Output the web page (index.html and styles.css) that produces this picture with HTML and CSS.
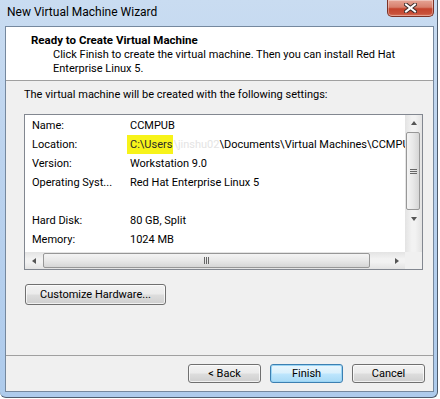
FILE: index.html
```html
<!DOCTYPE html>
<html lang="en">

<head>
    <meta charset="UTF-8">
    <title>New Virtual Machine Wizard</title>
    <link rel="stylesheet" href="styles.css">
</head>

<body>
    <div class="vindue">
        <div class="titellinje">
            <span class="titel">New Virtual Machine Wizard</span>
            <button class="luk" aria-label="Close">
                <svg width="13" height="10" viewBox="0 0 13 10">
                    <path d="M2 1.5 L11 8.5 M11 1.5 L2 8.5" stroke="#3a2a28" stroke-width="4" stroke-linecap="square" fill="none"/>
                    <path d="M2 1.5 L11 8.5 M11 1.5 L2 8.5" stroke="#fff" stroke-width="2" stroke-linecap="square" fill="none"/>
                </svg>
            </button>
        </div>

        <div class="klient">
            <header class="hoved">
                <h1>Ready to Create Virtual Machine</h1>
                <p>Click Finish to create the virtual machine. Then you can install Red Hat<br>Enterprise Linux 5.</p>
            </header>

            <section class="indhold">
                <p class="intro">The virtual machine will be created with the following settings:</p>

                <div class="liste">
                    <div class="raekker">
                        <div class="raekke"><span class="navn">Name:</span><span>CCMPUB</span></div>
                        <div class="raekke"><span class="navn">Location:</span><span><span class="gul">C:\Users</span><span class="sloret">\jinshu02</span>\Documents\Virtual Machines\CCMPUB</span></div>
                        <div class="raekke"><span class="navn">Version:</span><span>Workstation 9.0</span></div>
                        <div class="raekke"><span class="navn">Operating Syst...</span><span>Red Hat Enterprise Linux 5</span></div>
                        <div class="raekke"></div>
                        <div class="raekke"><span class="navn">Hard Disk:</span><span>80 GB, Split</span></div>
                        <div class="raekke"><span class="navn">Memory:</span><span>1024 MB</span></div>
                    </div>

                    <div class="skinne lodret">
                        <span class="pil op"></span>
                        <span class="greb lodret-greb"><i></i></span>
                        <span class="pil ned"></span>
                    </div>

                    <div class="skinne vandret">
                        <span class="pil venstre"></span>
                        <span class="greb vandret-greb"><i></i></span>
                        <span class="pil hoejre"></span>
                    </div>

                    <div class="hjoerne"></div>
                </div>

                <button class="knap tilpas">Customize Hardware...</button>
            </section>

            <footer class="bund">
                <button class="knap">&lt; Back</button>
                <button class="knap standard">Finish</button>
                <button class="knap">Cancel</button>
            </footer>
        </div>
    </div>
</body>

</html>
```

FILE: styles.css
```css
* {
    margin: 0;
    padding: 0;
    box-sizing: border-box;
}

body {
    margin: 0;
    background: #fff;
    font-family: Roboto, "Noto Sans", sans-serif;
    font-size: 11px;
    color: #000;
}

/* vinduesramme */
.vindue {
    width: 438px;
    height: 398px;
    display: flex;
    flex-direction: column;
    padding: 0 3px 5px 5px;
    border-right: 1px solid #4f5d6e;
    border-bottom: 1px solid #4f5d6e;
    border-radius: 0 0 6px 6px;
    background: linear-gradient(180deg, #c9dcf1 0%, #bcd3ee 40%, #aecbec 100%);
}

.titellinje {
    height: 26px;
    display: flex;
    align-items: flex-start;
}

.titel {
    padding: 4px 0 0 2px;
    font-size: 12px;
    line-height: 16px;
}

.luk {
    margin-left: auto;
    width: 47px;
    height: 17px;
    display: flex;
    align-items: center;
    justify-content: center;
    border: 1px solid #7c3226;
    border-top: none;
    border-radius: 0 0 5px 5px;
    background: linear-gradient(180deg, #e6a495 0%, #d77f6c 45%, #c4432c 55%, #c8513a 85%, #dc765c 100%);
    box-shadow: inset 0 0 0 1px rgba(255, 255, 255, 0.35);
}

.klient {
    flex: 1;
    display: flex;
    flex-direction: column;
    border: 1px solid #75889e;
    background: #f0f0f0;
}

/* hvid top */
.hoved {
    height: 54px;
    padding: 6px 0 0 25px;
    background: #fff;
    border-bottom: 1px solid #a0a0a0;
}

.hoved h1 {
    font-size: 11.5px;
    font-weight: bold;
    line-height: 15px;
}

.hoved p {
    padding-left: 22px;
    line-height: 14px;
}

.indhold {
    flex: 1;
    padding: 6px 10px 0 18px;
}

.intro {
    line-height: 15px;
}

/* listevisning med rullebjaelker */
.liste {
    margin-top: 12px;
    width: 399px;
    height: 156px;
    display: grid;
    grid-template-columns: 1fr 17px;
    grid-template-rows: 1fr 17px;
    border: 1px solid #828790;
    background: #fff;
}

.raekker {
    overflow: hidden;
    padding: 1px 0 0 7px;
}

.raekke {
    height: 19px;
    display: flex;
    align-items: center;
    white-space: nowrap;
}

.navn {
    width: 98px;
    flex-shrink: 0;
}

.gul {
    background: #f7f31a;
    padding: 3px 1px 3px 0;
    margin-left: -3px;
    padding-left: 3px;
    color: #2a2a2a;
}

.sloret {
    color: #e4e4e4;
}

.skinne {
    display: flex;
    background: #eaeaea;
}

.lodret {
    flex-direction: column;
    background: linear-gradient(90deg, #e3e3e3, #f2f2f2 40%, #f2f2f2 60%, #e3e3e3);
}

.vandret {
    background: linear-gradient(180deg, #e3e3e3, #f2f2f2 40%, #f2f2f2 60%, #e3e3e3);
}

.pil {
    width: 17px;
    height: 17px;
    flex-shrink: 0;
    display: flex;
    align-items: center;
    justify-content: center;
}

.pil::before {
    content: "";
    border: 3px solid transparent;
}

.op::before {
    border-bottom: 4px solid #555;
    border-top: 0;
    margin-top: -2px;
}

.ned::before {
    border-top: 4px solid #555;
    border-bottom: 0;
}

.venstre::before {
    border-right: 4px solid #555;
    border-left: 0;
}

.hoejre::before {
    border-left: 4px solid #555;
    border-right: 0;
}

.greb {
    display: flex;
    align-items: center;
    justify-content: center;
    border: 1px solid #979797;
    border-radius: 2px;
}

.lodret-greb {
    height: 78px;
    margin: 0 2px 0 1px;
    background: linear-gradient(90deg, #f4f4f4, #e8e8e8 50%, #d6d6d6);
}

.vandret-greb {
    width: 327px;
    margin: 1px 18px 1px 1px;
    background: linear-gradient(180deg, #f4f4f4, #e8e8e8 50%, #d6d6d6);
}

.lodret-greb i {
    width: 7px;
    height: 5px;
    border-top: 1px solid #666;
    border-bottom: 1px solid #666;
    background: linear-gradient(180deg, transparent 1px, #666 1px, #666 2px, transparent 2px);
}

.vandret-greb i {
    width: 5px;
    height: 7px;
    border-left: 1px solid #666;
    border-right: 1px solid #666;
    background: linear-gradient(90deg, transparent 1px, #666 1px, #666 2px, transparent 2px);
}

.hjoerne {
    background: #f0f0f0;
}

/* knapper */
.knap {
    font-family: inherit;
    font-size: 11px;
    color: #000;
    height: 21px;
    border: 1px solid #707070;
    border-radius: 3px;
    background: linear-gradient(180deg, #f2f2f2 0%, #ebebeb 48%, #dddddd 52%, #cfcfcf 100%);
    box-shadow: inset 0 0 0 1px rgba(255, 255, 255, 0.7);
}

.tilpas {
    margin: 14px 0 0 1px;
    width: 141px;
}

.bund {
    display: flex;
    justify-content: flex-end;
    gap: 9px;
    padding: 8px 8px 0 0;
    height: 36px;
    border-top: 1px solid #a0a0a0;
}

.bund .knap {
    width: 73px;
    height: 19px;
    line-height: 15px;
}

.standard {
    border-color: #3c7fb1;
    box-shadow: inset 0 0 0 1px #9ad5f5;
    background: linear-gradient(180deg, #eaf6fd 0%, #d9f0fc 48%, #bee6fd 52%, #a7d9f5 100%);
}
```
